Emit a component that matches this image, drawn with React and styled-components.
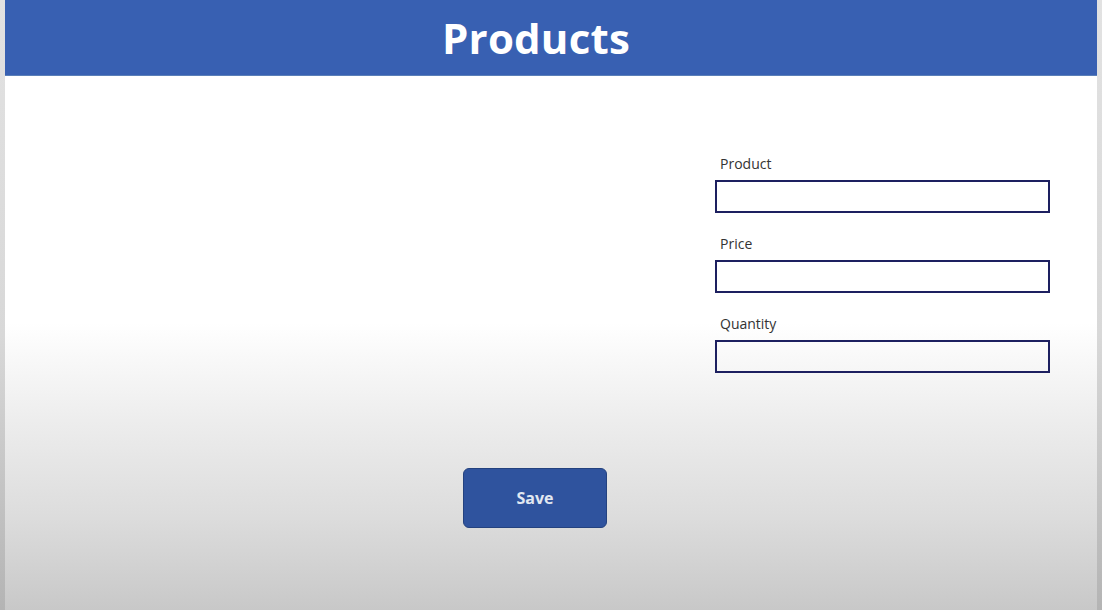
import React from "react";
import styled, { createGlobalStyle } from "styled-components";

const GlobalStyle = createGlobalStyle`
  html, body {
    margin: 0;
    padding: 0;
    height: 100%;
  }
  body {
    font-family: "Open Sans", "Liberation Sans", sans-serif;
    overflow: hidden;
  }
`;

const fields = ["Product", "Price", "Quantity"];

const App = () => {
  return (
    <>
      <GlobalStyle />
      <Frame>
        <Edge />
        <Canvas>
          <Header>
            <Title>Products</Title>
          </Header>
          <Main>
            <Form>
              {fields.map((name) => (
                <Field key={name}>
                  <Label>{name}</Label>
                  <Input type="text" />
                </Field>
              ))}
            </Form>
            <Actions>
              <SaveButton>Save</SaveButton>
            </Actions>
          </Main>
        </Canvas>
        <Edge />
      </Frame>
    </>
  );
};

export default App;

const Frame = styled.div`
  display: flex;
  width: 100%;
  height: 610px;
`;

const Edge = styled.div`
  flex: 0 0 5px;
  background: linear-gradient(#e2e2e2 0%, #d8d8d8 55%, #b4b4b4 100%);
`;

const Canvas = styled.div`
  flex: 1;
  display: flex;
  flex-direction: column;
  background: linear-gradient(
    #ffffff 0%,
    #ffffff 53%,
    #eeeeee 68%,
    #dcdcdc 85%,
    #c8c8c8 100%
  );
`;

const Header = styled.header`
  height: 76px;
  background-color: #3860b2;
  display: flex;
  align-items: center;
  justify-content: center;
  padding-right: 30px;
  border-bottom: 1px solid #5a7fb8;
  box-sizing: border-box;
`;

const Title = styled.h1`
  margin: 0;
  color: #ffffff;
  font-size: 42px;
  font-weight: 700;
  line-height: 1;
  letter-spacing: 0.2px;
`;

const Main = styled.main`
  flex: 1;
  display: flex;
  flex-direction: column;
  padding-top: 78px;
`;

const Form = styled.div`
  align-self: flex-end;
  width: 335px;
  margin-right: 47px;
  display: flex;
  flex-direction: column;
  gap: 21px;
`;

const Field = styled.div`
  display: flex;
  flex-direction: column;
  gap: 7px;
`;

const Label = styled.label`
  font-size: 14px;
  line-height: 19px;
  color: #333333;
  padding-left: 5px;
`;

const Input = styled.input`
  box-sizing: border-box;
  height: 33px;
  width: 100%;
  margin: 0;
  border: 2px solid #1d2060;
  background: transparent;
  outline: none;
`;

const Actions = styled.div`
  display: flex;
  padding-left: 458px;
  margin-top: 95px;
`;

const SaveButton = styled.button`
  width: 144px;
  height: 60px;
  border: 1px solid #24427f;
  border-radius: 6px;
  background-color: #2f539e;
  color: #e2e8f1;
  font-family: "Open Sans", "Liberation Sans", sans-serif;
  font-size: 16px;
  font-weight: 700;
  cursor: pointer;
`;
